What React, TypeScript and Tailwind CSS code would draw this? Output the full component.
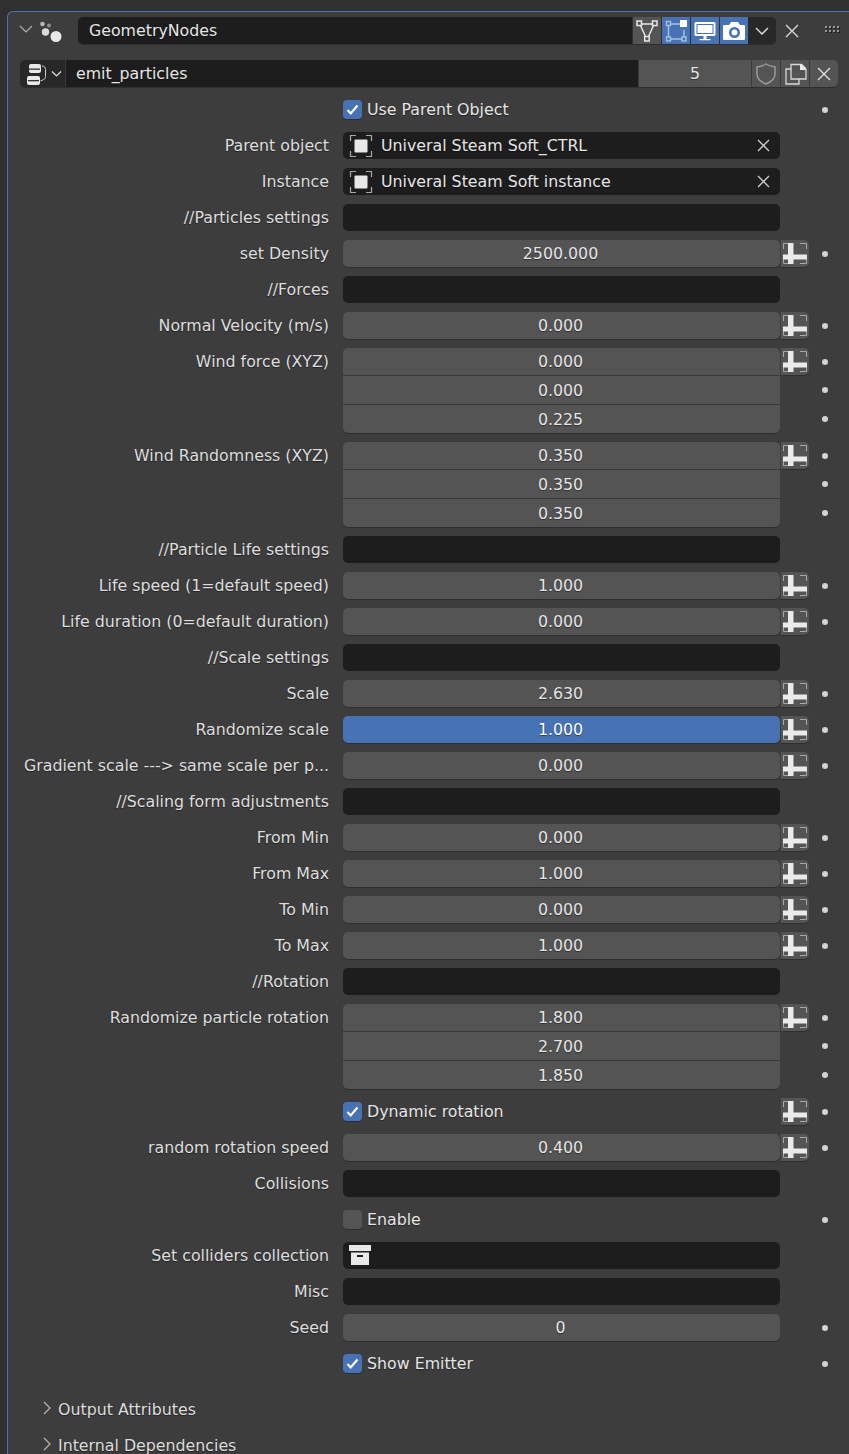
import React from "react";

const ts = "[text-shadow:0_1px_1px_rgba(0,0,0,0.45)]";

function UseAttr() {
  return (
    <div className="ml-[1px] w-[28px] h-[27px] bg-[#545454] rounded-r-[5px] shadow-[0_1px_0_#2e2e2e] shrink-0">
      <svg width="28" height="27" viewBox="0 0 28 27">
        <g fill="none" stroke="#a8a8a8" strokeWidth="1">
          <path d="M2.500 9V3.500H7" />
          <path d="M19 3.500h6.500V9" />
          <path d="M2.500 19v4.500H7" />
          <path d="M19 23.500h6.500V19" />
        </g>
        <rect x="7" y="3" width="5.500" height="21" fill="#eaeaea" />
        <rect x="2" y="14.500" width="24" height="5" fill="#eaeaea" />
      </svg>
    </div>
  );
}

function Dot() {
  return <span className="w-[6px] h-[6px] rounded-full bg-[#d4d4d4] shrink-0" />;
}

function Deco({ btn, dot = true }: { btn?: boolean; dot?: boolean }) {
  return (
    <>
      {btn ? <UseAttr /> : <span className="w-[29px] shrink-0" />}
      <span className="w-[13px] shrink-0" />
      {dot ? <Dot /> : null}
    </>
  );
}

function Label({ text }: { text?: string }) {
  return (
    <div className={`w-[321px] text-right whitespace-nowrap shrink-0 text-[#dedede] ${ts}`}>{text}</div>
  );
}

function Row({ label, children }: { label?: string; children: React.ReactNode }) {
  return (
    <div className="flex items-center h-[27px]">
      <Label text={label} />
      <span className="w-[14px] shrink-0" />
      {children}
    </div>
  );
}

function Num({ label, value, active }: { label: string; value: string; active?: boolean }) {
  return (
    <Row label={label}>
      <div
        className={`w-[437px] h-[27px] rounded-[5px] flex items-center justify-center shrink-0 pr-[2px] shadow-[0_1px_0_#2e2e2e] ${
          active ? "bg-[#4772b3] text-white" : "bg-[#545454] text-[#e6e6e6]"
        } ${ts}`}
      >
        {value}
      </div>
      <Deco btn />
    </Row>
  );
}

function Vec({ label, values }: { label: string; values: string[] }) {
  return (
    <div className="flex flex-col h-[85px]">
      {values.map((v, i) => (
        <div key={i} className={`flex items-center ${i === 0 ? "h-[27px]" : "h-[29px]"}`}>
          <Label text={i === 0 ? label : ""} />
          <span className="w-[14px] shrink-0" />
          <div
            className={`w-[437px] flex items-center justify-center shrink-0 pr-[2px] bg-[#545454] text-[#e6e6e6] ${ts} ${
              i === 0
                ? "h-[27px] rounded-t-[5px]"
                : i === values.length - 1
                  ? "h-[29px] rounded-b-[5px] border-t border-[#393939] shadow-[0_1px_0_#2e2e2e]"
                  : "h-[29px] border-t border-[#393939]"
            }`}
          >
            {v}
          </div>
          <Deco btn={i === 0} />
        </div>
      ))}
    </div>
  );
}

function Cube() {
  return (
    <svg width="26" height="26" viewBox="0 0 26 26" className="shrink-0">
      <g fill="none" stroke="#a8a8a8" strokeWidth="1.200">
        <path d="M2.500 8V2.500H8" />
        <path d="M18 2.500h5.500V8" />
        <path d="M2.500 18v5.500H8" />
        <path d="M18 23.500h5.500V18" />
      </g>
      <rect x="6.500" y="6.500" width="13" height="13" rx="1" fill="#e8e8e8" />
    </svg>
  );
}

function ObjField({ label, value }: { label: string; value: string }) {
  return (
    <Row label={label}>
      <div className={`w-[437px] h-[27px] rounded-[5px] bg-[#1d1d1d] flex items-center shrink-0 pl-[5px] pr-[9px] text-[#e6e6e6] ${ts}`}>
        <Cube />
        <span className="ml-[7px] flex-1 whitespace-nowrap">{value}</span>
        <svg width="15" height="15" viewBox="0 0 15 15">
          <path d="M2 2l11 11M13 2L2 13" stroke="#cfcfcf" strokeWidth="1.300" fill="none" />
        </svg>
      </div>
    </Row>
  );
}

function Text({ label }: { label: string }) {
  return (
    <Row label={label}>
      <div className="w-[437px] h-[27px] rounded-[5px] bg-[#1d1d1d] shrink-0" />
    </Row>
  );
}

function Check({ label, checked = true, btn }: { label: string; checked?: boolean; btn?: boolean }) {
  return (
    <Row>
      <div className="w-[437px] h-[27px] flex items-center shrink-0">
        <span
          className={`w-[19px] h-[19px] rounded-[4px] flex items-center justify-center shadow-[0_1px_0_#2e2e2e] ${
            checked ? "bg-[#4772b3]" : "bg-[#545454]"
          }`}
        >
          {checked ? (
            <svg width="15" height="15" viewBox="0 0 15 15">
              <path d="M2.500 8l3.200 3.400L12.500 3.500" stroke="#fff" strokeWidth="2.200" fill="none" />
            </svg>
          ) : null}
        </span>
        <span className={`ml-[5px] text-[#e6e6e6] ${ts}`}>{label}</span>
      </div>
      <Deco btn={btn} />
    </Row>
  );
}

function Sub({ label }: { label: string }) {
  return (
    <div className={`flex items-center h-[27px] pl-[34px] text-[#dedede] ${ts}`}>
      <svg width="10" height="16" viewBox="0 0 10 16" className="mr-[6px] mb-[3px]">
        <path d="M2 2l6 6-6 6" stroke="#b8b8b8" strokeWidth="1.200" fill="none" />
      </svg>
      {label}
    </div>
  );
}

function HeadBtn({ bg, children }: { bg: string; children: React.ReactNode }) {
  return <div className={`w-[28px] h-[27px] flex items-center justify-center shrink-0 ${bg}`}>{children}</div>;
}

export default function App() {
  return (
    <div
      className="w-[849px] h-[1454px] bg-[#303030] overflow-hidden pt-[11px] pl-[7px] text-[15.8px] leading-[27px]"
      style={{ fontFamily: '"DejaVu Sans", sans-serif' }}
    >
      <div className="bg-[#3d3d3d] border-l border-t border-[#4772b3] rounded-tl-[6px] h-[1460px]">
        {/* header */}
        <div className="flex items-center h-[27px] mt-[5px]">
          <svg width="16" height="10" viewBox="0 0 16 10" className="ml-[10px] mb-[4px] shrink-0">
            <path d="M2 2l6 6 6-6" stroke="#b0b0b0" strokeWidth="1.200" fill="none" />
          </svg>
          <svg width="24" height="24" viewBox="0 0 24 24" className="ml-[4px] shrink-0">
            <circle cx="4.500" cy="5" r="2.300" fill="#b8b8b8" />
            <circle cx="11" cy="6.500" r="2" fill="#8e8e8e" />
            <circle cx="7.500" cy="13" r="3.700" fill="#dcdcdc" />
            <circle cx="18" cy="17.500" r="5.500" fill="#e8e8e8" />
          </svg>
          <div className="ml-[16px] flex h-[27px] w-[698px] rounded-[5px] overflow-hidden shrink-0 shadow-[0_1px_0_#2e2e2e]">
            <div className={`bg-[#1d1d1d] w-[554px] pl-[11px] text-[#e6e6e6] ${ts}`}>GeometryNodes</div>
            <span className="w-[1px] bg-[#303030]" />
            <HeadBtn bg="bg-[#545454]">
              <svg width="24" height="24" viewBox="0 0 24 24" fill="none" stroke="#e8e8e8" strokeWidth="1.500">
                <path d="M6 5h12M5.500 6.500l5 11M18.500 6.500l-5 11" />
                <rect x="2" y="2" width="4.500" height="4.500" />
                <rect x="17.500" y="2" width="4.500" height="4.500" />
                <rect x="9.700" y="17.500" width="4.500" height="4.500" />
              </svg>
            </HeadBtn>
            <span className="w-[1px] bg-[#303030]" />
            <HeadBtn bg="bg-[#4772b3]">
              <svg width="24" height="24" viewBox="0 0 24 24" fill="none" stroke="#a9c1e4" strokeWidth="1.400">
                <path d="M7 5h9M4.500 7v11M7 20h11M20 11v7" />
                <rect x="2.500" y="2.500" width="4" height="4" />
                <rect x="2.500" y="18" width="4" height="4" />
                <rect x="18" y="18" width="4" height="4" />
                <rect x="16" y="1" width="7" height="7" fill="#fff" stroke="none" />
              </svg>
            </HeadBtn>
            <span className="w-[1px] bg-[#303030]" />
            <HeadBtn bg="bg-[#4772b3]">
              <svg width="24" height="24" viewBox="0 0 24 24">
                <path
                  fillRule="evenodd"
                  d="M3 3h18a1.500 1.500 0 0 1 1.500 1.500v11A1.500 1.500 0 0 1 21 17H3a1.500 1.500 0 0 1-1.500-1.500v-11A1.500 1.500 0 0 1 3 3zm.500 2v10h17V5z"
                  fill="#fff"
                />
                <rect x="4.500" y="6" width="15" height="8" fill="#fff" />
                <path d="M10.500 17h3v3h-3zM6.500 20h11v1.300h-11z" fill="#fff" />
              </svg>
            </HeadBtn>
            <span className="w-[1px] bg-[#303030]" />
            <HeadBtn bg="bg-[#4772b3]">
              <svg width="24" height="24" viewBox="0 0 24 24">
                <path
                  fillRule="evenodd"
                  d="M2 6h5l2-3h7l2 3h4a1 1 0 0 1 1 1v13a1 1 0 0 1-1 1H2a1 1 0 0 1-1-1V7a1 1 0 0 1 1-1zm10.500 2a5.500 5.500 0 1 0 0 11 5.500 5.500 0 0 0 0-11zm0 2.500a3 3 0 1 1 0 6 3 3 0 0 1 0-6z"
                  fill="#fff"
                />
              </svg>
            </HeadBtn>
            <HeadBtn bg="bg-[#282828]">
              <svg width="16" height="10" viewBox="0 0 16 10">
                <path d="M2 2l6 6 6-6" stroke="#e0e0e0" strokeWidth="1.400" fill="none" />
              </svg>
            </HeadBtn>
          </div>
          <svg width="16" height="16" viewBox="0 0 16 16" className="ml-[8px] shrink-0">
            <path d="M2 2l12 12M14 2L2 14" stroke="#d8d8d8" strokeWidth="1.400" fill="none" />
          </svg>
          <div className="ml-[25px] mb-[4px] grid grid-cols-4 gap-[2px] w-[14px]">
            {Array.from({ length: 8 }).map((_, i) => (
              <span key={i} className="w-[2px] h-[2px] bg-[#9a9a9a] shadow-[1px_1px_0_#1f1f1f]" />
            ))}
          </div>
        </div>

        {/* node group row */}
        <div className="flex h-[27px] mt-[16px] ml-[12px] w-[818px] rounded-[5px] overflow-hidden shadow-[0_1px_0_#2e2e2e]">
          <div className="w-[45px] bg-[#282828] flex items-center shrink-0 pl-[2px]">
            <svg width="24" height="24" viewBox="0 0 24 24" className="shrink-0">
              <rect x="7" y="2" width="12" height="9" rx="2" fill="#e8e8e8" />
              <rect x="5" y="14" width="13" height="9" rx="2" fill="#e8e8e8" />
              <rect x="7" y="6.500" width="11" height="1.300" fill="#333" />
              <rect x="6" y="18" width="11" height="1.300" fill="#333" />
              <path d="M20 4c2.500 0 3.500 1.500 3.500 3.500v7c0 2-1 3-3 3.500l-2 1" stroke="#d0d0d0" fill="none" />
            </svg>
            <svg width="11" height="8" viewBox="0 0 11 8" className="ml-[5px]">
              <path d="M1 1.500l4.500 4.500L10 1.500" stroke="#e0e0e0" strokeWidth="1.200" fill="none" />
            </svg>
          </div>
          <span className="w-[1px] bg-[#3a3a3a]" />
          <div className={`w-[572px] bg-[#1d1d1d] pl-[10px] text-[#e6e6e6] shrink-0 ${ts}`}>emit_particles</div>
          <span className="w-[1px] bg-[#3a3a3a]" />
          <div className={`w-[112px] bg-[#545454] text-center text-[#e6e6e6] shrink-0 ${ts}`}>5</div>
          <span className="w-[1px] bg-[#3a3a3a]" />
          <HeadBtn bg="bg-[#545454]">
            <svg width="22" height="24" viewBox="0 0 22 24">
              <path d="M11 2c3 2 6 2.500 9 3v7c0 5-4 8-9 10-5-2-9-5-9-10V5c3-.5 6-1 9-3z" fill="none" stroke="#9a9a9a" strokeWidth="1.500" />
            </svg>
          </HeadBtn>
          <span className="w-[1px] bg-[#3a3a3a]" />
          <HeadBtn bg="bg-[#545454]">
            <svg width="24" height="24" viewBox="0 0 24 24">
              <path d="M8 7H3v15h13v-5" fill="none" stroke="#d8d8d8" strokeWidth="1.300" />
              <path d="M8 2.500h10l5 5V17H8z" fill="none" stroke="#d8d8d8" strokeWidth="1.300" />
              <path d="M17 2h2l4 4v2h-6z" fill="#e8e8e8" />
            </svg>
          </HeadBtn>
          <span className="w-[1px] bg-[#3a3a3a]" />
          <HeadBtn bg="bg-[#545454]">
            <svg width="16" height="16" viewBox="0 0 16 16">
              <path d="M2 2l12 12M14 2L2 14" stroke="#e0e0e0" strokeWidth="1.400" fill="none" />
            </svg>
          </HeadBtn>
        </div>

        {/* properties */}
        <div className="flex flex-col gap-[9px] mt-[9px]">
          <Check label="Use Parent Object" />
          <ObjField label="Parent object" value="Univeral Steam Soft_CTRL" />
          <ObjField label="Instance" value="Univeral Steam Soft instance" />
          <Text label="//Particles settings" />
          <Num label="set Density" value="2500.000" />
          <Text label="//Forces" />
          <Num label="Normal Velocity (m/s)" value="0.000" />
          <Vec label="Wind force (XYZ)" values={["0.000", "0.000", "0.225"]} />
          <Vec label="Wind Randomness (XYZ)" values={["0.350", "0.350", "0.350"]} />
          <Text label="//Particle Life settings" />
          <Num label="Life speed (1=default speed)" value="1.000" />
          <Num label="Life duration (0=default duration)" value="0.000" />
          <Text label="//Scale settings" />
          <Num label="Scale" value="2.630" />
          <Num label="Randomize scale" value="1.000" active />
          <Num label="Gradient scale ---> same scale per p..." value="0.000" />
          <Text label="//Scaling form adjustments" />
          <Num label="From Min" value="0.000" />
          <Num label="From Max" value="1.000" />
          <Num label="To Min" value="0.000" />
          <Num label="To Max" value="1.000" />
          <Text label="//Rotation" />
          <Vec label="Randomize particle rotation" values={["1.800", "2.700", "1.850"]} />
          <Check label="Dynamic rotation" btn />
          <Num label="random rotation speed" value="0.400" />
          <Text label="Collisions" />
          <Check label="Enable" checked={false} />
          <Row label="Set colliders collection">
            <div className="w-[437px] h-[27px] rounded-[5px] bg-[#1d1d1d] shrink-0 pl-[5px] flex items-center">
              <svg width="24" height="24" viewBox="0 0 24 24">
                <rect x="1" y="1" width="22" height="6" fill="#e8e8e8" />
                <path fillRule="evenodd" d="M3 8.500h18V21H3zM9 11v2h6v-2z" fill="#e8e8e8" />
              </svg>
            </div>
          </Row>
          <Text label="Misc" />
          <Row label="Seed">
            <div className={`w-[437px] h-[27px] rounded-[5px] bg-[#545454] text-[#e6e6e6] text-center pr-[2px] shrink-0 shadow-[0_1px_0_#2e2e2e] ${ts}`}>0</div>
            <Deco />
          </Row>
          <Check label="Show Emitter" />
          <div className="flex flex-col gap-[9px] mt-[10px]">
            <Sub label="Output Attributes" />
            <Sub label="Internal Dependencies" />
          </div>
        </div>
      </div>
    </div>
  );
}
